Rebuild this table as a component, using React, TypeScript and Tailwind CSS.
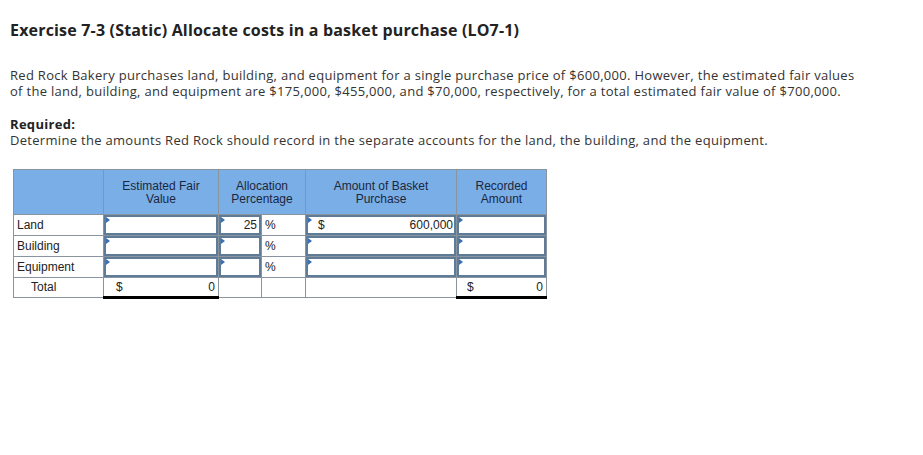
import React from "react";

const Tri = () => (
  <span className="absolute left-0 top-0 w-0 h-0 border-t-[3px] border-b-[3px] border-l-[4px] border-t-transparent border-b-transparent border-l-[#3a6fb5]" />
);

const Input = ({ children, className = "" }: { children?: React.ReactNode; className?: string }) => (
  <div className={`relative h-[20px] border-2 border-[#5e7b98] bg-white flex items-center ${className}`}>
    <Tri />
    {children}
  </div>
);

export default function App() {
  const td = "border border-[#8a949e] p-0 h-[20px]";
  const rows = ["Land", "Building", "Equipment"];
  return (
    <div className="w-[923px] h-[455px] bg-white text-[#2b2b2b]" style={{ fontFamily: "'Open Sans', Lato, sans-serif" }}>
      <div className="pl-[10px] pt-[19px]">
        <h1 className="text-[16px] font-bold leading-[22px] tracking-[0.18px] text-[#222]">
          Exercise 7-3 (Static) Allocate costs in a basket purchase (LO7-1)
        </h1>
        <p className="mt-[26px] text-[13px] leading-[16px] tracking-[0.3px] text-[#333]">
          Red Rock Bakery purchases land, building, and equipment for a single purchase price of $600,000. However, the estimated fair values
          <br />
          of the land, building, and equipment are $175,000, $455,000, and $70,000, respectively, for a total estimated fair value of $700,000.
        </p>
        <p className="mt-[17px] text-[13px] leading-[16px] tracking-[0.3px] text-[#333]">
          <span className="font-bold text-[#222]">Required:</span>
          <br />
          Determine the amounts Red Rock should record in the separate accounts for the land, the building, and the equipment.
        </p>
      </div>
      <div className="pl-[13px] pt-[21px]">
        <table
          className="border-collapse text-[12px] leading-[13px] text-[#222]"
          style={{ fontFamily: "'Liberation Sans', Arial, sans-serif" }}
        >
          <colgroup>
            <col className="w-[90px]" />
            <col className="w-[115px]" />
            <col className="w-[43px]" />
            <col className="w-[44px]" />
            <col className="w-[151px]" />
            <col className="w-[90px]" />
          </colgroup>
          <thead>
            <tr className="h-[45px] bg-[#7aaee6] text-[#1a2740]">
              <th className="border border-[#8a949e] font-normal"></th>
              <th className="border border-[#8a949e] font-normal align-top pt-[10px]">Estimated Fair<br />Value</th>
              <th colSpan={2} className="border border-[#8a949e] font-normal align-top pt-[10px]">Allocation<br />Percentage</th>
              <th className="border border-[#8a949e] font-normal align-top pt-[10px]">Amount of Basket<br />Purchase</th>
              <th className="border border-[#8a949e] font-normal align-top pt-[10px]">Recorded<br />Amount</th>
            </tr>
          </thead>
          <tbody>
            {rows.map((r, i) => (
              <tr key={r}>
                <td className={`${td} pl-[3px]`}>{r}</td>
                <td className={td}><Input /></td>
                <td className={td}>
                  <Input className="justify-end pr-[2px]">{i === 0 ? "25" : ""}</Input>
                </td>
                <td className={`${td} pl-[3px]`}>%</td>
                <td className={td}>
                  <Input className="justify-between px-[10px] pr-[1px]">
                    {i === 0 ? (
                      <>
                        <span>$</span>
                        <span>600,000</span>
                      </>
                    ) : null}
                  </Input>
                </td>
                <td className={td}><Input /></td>
              </tr>
            ))}
            <tr>
              <td className={`${td} pl-[17px]`}>Total</td>
              <td className={`${td} border-t-black border-b-[3px] border-b-black`}>
                <div className="flex justify-between pl-[12px] pr-[3px]">
                  <span>$</span>
                  <span>0</span>
                </div>
              </td>
              <td className={td}></td>
              <td className={td}></td>
              <td className={td}></td>
              <td className={`${td} border-t-black border-b-[3px] border-b-black`}>
                <div className="flex justify-between pl-[10px] pr-[3px]">
                  <span>$</span>
                  <span>0</span>
                </div>
              </td>
            </tr>
          </tbody>
        </table>
      </div>
    </div>
  );
}
